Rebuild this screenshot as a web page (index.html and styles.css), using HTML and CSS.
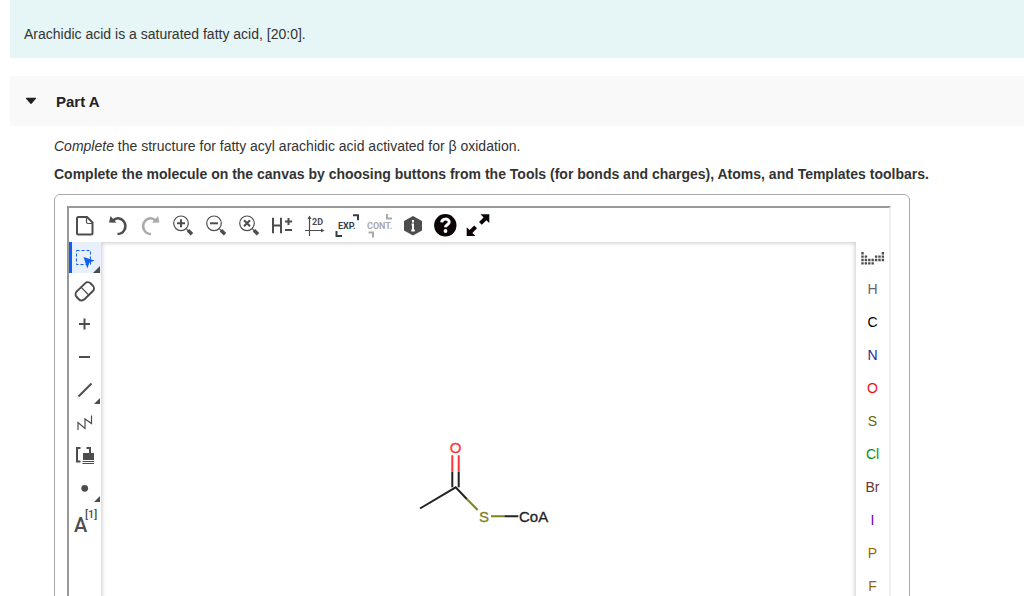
FILE: index.html
```
<!DOCTYPE html>
<html lang="en">
<head>
  <meta charset="UTF-8">
  <meta name="viewport" content="width=device-width, initial-scale=1.0">
  <title>Part A</title>
  <link rel="stylesheet" href="styles.css">
</head>
<body>
  <div class="intro">
    <p>Arachidic acid is a saturated fatty acid, [20:0].</p>
  </div>

  <button class="part-header" aria-expanded="true">
    <svg width="12" height="8" viewBox="0 0 12 8"><path d="M1.500 .8h9q1 0 .4.9L6.800 6.500q-.8.8-1.600 0L1.100 1.700Q.5.8 1.500.8z" fill="#222"/></svg>
    <span>Part A</span>
  </button>

  <main class="part-body">
    <p class="question"><em>Complete</em> the structure for fatty acyl arachidic acid activated for β oxidation.</p>
    <p class="instructions">Complete the molecule on the canvas by choosing buttons from the Tools (for bonds and charges), Atoms, and Templates toolbars.</p>

    <div class="editor-frame">
      <div class="editor">
        <div class="top-toolbar">
          <button class="tool" aria-label="New document">
            <svg viewBox="0 0 33 33"><path d="M9.500 9h8.500l5.500 5.500V25q0 1.500-1.500 1.500H9.500Q8 26.500 8 25V10.500Q8 9 9.500 9z" class="line"/><path d="M17.500 9v5q0 1.500 1.500 1.500h5" class="thin"/></svg>
          </button>
          <button class="tool" aria-label="Undo">
            <svg viewBox="0 0 33 33"><path d="M11 12.500C14.500 9 20 9.800 22.500 14.500S22 26 15.500 26" class="heavy"/><path d="M7 14.500 8.500 8l6 6.800z" class="solid"/></svg>
          </button>
          <button class="tool disabled" aria-label="Redo">
            <svg viewBox="0 0 33 33"><path d="M20.500 12.500C17 9 11.500 9.800 9 14.500S9.500 26 16 26" class="heavy"/><path d="M24.500 14.500 23 8l-6 6.800z" class="solid"/></svg>
          </button>
          <button class="tool" aria-label="Zoom in">
            <svg viewBox="0 0 33 33"><circle cx="13" cy="15.300" r="7.300" class="thin"/><path d="M9 15.300h8M13 11.300v8" class="line"/><path d="m18.500 20.800 2 2" class="thin"/><path d="m20 22.300 4 4" class="handle"/></svg>
          </button>
          <button class="tool" aria-label="Zoom out">
            <svg viewBox="0 0 33 33"><circle cx="13" cy="15.300" r="7.300" class="thin"/><path d="M9 15.300h8" class="line"/><path d="m18.500 20.800 2 2" class="thin"/><path d="m20 22.300 4 4" class="handle"/></svg>
          </button>
          <button class="tool" aria-label="Zoom reset">
            <svg viewBox="0 0 33 33"><circle cx="13" cy="15.300" r="7.300" class="thin"/><path d="m10 12.300 6 6m0-6-6 6" class="line"/><path d="m18.500 20.800 2 2" class="thin"/><path d="m20 22.300 4 4" class="handle"/></svg>
          </button>
          <button class="tool" aria-label="Toggle hydrogens">
            <svg viewBox="0 0 33 33"><path d="M6 9.700v15.600M14 9.700v15.600M6 17.500h8M18 13.500h7M21.500 10v7M18 22h7" class="line"/></svg>
          </button>
          <button class="tool" aria-label="Clean in 2D">
            <svg viewBox="0 0 33 33"><path d="M9.500 9v19M5 22.500h18" class="thin"/><path d="m7.500 11 2-3.500 2 3.500zM21 20.500l3.500 2-3.500 2z" class="solid"/><text x="12" y="16.500" font-size="9">2D</text></svg>
          </button>
          <button class="tool" aria-label="Expand groups">
            <svg viewBox="0 0 33 33" class="slate"><path d="M20 7.200h5v5M3.500 23v5h5.500" class="line"/><text x="5" y="21" font-size="9">EXP.</text></svg>
          </button>
          <button class="tool disabled" aria-label="Contract groups">
            <svg viewBox="0 0 33 33"><path d="M21 6v4.500h5M2.500 24.500h4.500v5" class="line"/><text x="1" y="21" font-size="9">CONT.</text></svg>
          </button>
          <button class="tool" aria-label="Information">
            <svg viewBox="0 0 33 33"><path d="m14 8 9 5v9.500L14 27.500l-9-5V13z" class="solid"/><path d="M14 12v2.600M12.600 16.500H14v6M12.300 22.500h3.500" stroke="#fff" stroke-width="2" fill="none"/></svg>
          </button>
          <button class="tool" aria-label="Help">
            <svg viewBox="0 0 33 33"><circle cx="13.300" cy="17.300" r="11.200" fill="#0b0304"/><path d="M9.700 14.300c.3-4.200 7.500-4.200 7.500-.2 0 2.700-3.700 2.600-3.700 5.100" stroke="#fff" stroke-width="3" fill="none"/><circle cx="13.500" cy="23" r="1.900" fill="#fff"/></svg>
          </button>
          <button class="tool" aria-label="Full screen">
            <svg viewBox="0 0 33 33"><path d="M15.500 6.300h8.800v8.800l-2.900-2.900-4.600 4.600-2.800-2.800 4.600-4.600zM10.500 28H1.700v-8.800l2.900 2.900 4.600-4.600 2.800 2.800-4.600 4.600z" fill="#0b0304"/></svg>
          </button>
        </div>

        <div class="workspace">
          <div class="side-toolbar">
            <button class="tool selected" aria-label="Rectangle selection">
              <svg viewBox="0 0 32 31"><path d="M7.500 8.500h14v14h-14z" fill="none" stroke="#1060f0" stroke-dasharray="3 2"/><path d="m14.500 15 11 3.500-5.200 2.200-2 5.800z" fill="#1060f0"/><path d="M31 24v7h-7z" class="solid"/></svg>
            </button>
            <button class="tool" aria-label="Erase">
              <svg viewBox="0 0 32 31"><g transform="rotate(-44 15.800 16.300)"><rect x="6" y="10.800" width="19.500" height="11" rx="4" class="line"/><path d="M16 11v11" class="thin"/></g></svg>
            </button>
            <button class="tool" aria-label="Increase charge">
              <svg viewBox="0 0 32 31"><path d="M10 16h11M15.500 10.500v11" class="line"/></svg>
            </button>
            <button class="tool" aria-label="Decrease charge">
              <svg viewBox="0 0 32 31"><path d="M10 16h11" class="line"/></svg>
            </button>
            <button class="tool" aria-label="Single bond">
              <svg viewBox="0 0 32 31"><path d="M9.500 22.500 22.500 9.500" class="line"/><path d="M31 24v6h-6z" class="solid"/></svg>
            </button>
            <button class="tool" aria-label="Chain">
              <svg viewBox="0 0 32 31"><path d="M9 23v-7.500l7 6V12l6.500 4.500v-8" class="thin"/></svg>
            </button>
            <button class="tool" aria-label="Position variation bond">
              <svg viewBox="0 0 32 31"><path d="M11.500 8H8v13.500h3.500M17.500 8h3.500v5" class="line"/><path d="M14 13h11v7H14z" class="solid"/><path d="M13.500 21.500H25M13.500 23.500H25" class="thin"/></svg>
            </button>
            <button class="tool" aria-label="Radical">
              <svg viewBox="0 0 32 31"><circle cx="15.700" cy="15.300" r="3.400" class="solid"/><path d="M31 23v6h-6z" class="solid"/></svg>
            </button>
            <button class="tool" aria-label="Atom map">
              <svg viewBox="0 0 32 31"><text x="5" y="26" font-size="20" font-weight="500">A<tspan x="16" y="12" font-size="11">[1]</tspan></text></svg>
            </button>
          </div>

          <div class="canvas">
            <svg class="molecule" width="150" height="100" viewBox="0 0 150 100">
              <path d="M42.300 36.700v15.500M48.700 36.700v15.500M10 73.500 45.700 52.300 57 64.300M94.300 81.300h14" stroke="#222"/>
              <path d="M42.300 20.300v16.400M48.700 20.300v16.400" stroke="#f33"/>
              <path d="m57 64.300 10.700 10.700M81 81.300h13.300" stroke="#808020"/>
              <text x="45.500" y="18" text-anchor="middle" fill="#f33" stroke="#f33">O</text>
              <text x="74" y="87" text-anchor="middle" fill="#808020" stroke="#808020">S</text>
              <text x="109" y="87" fill="#222" stroke="#222">CoA</text>
            </svg>
          </div>

          <div class="atom-toolbar">
            <button class="atom periodic" aria-label="Periodic table">
              <svg width="24" height="13" viewBox="0 0 24 13"><path d="M1.500 0v13M4.900 3.400v9.600M8.300 6.800v6.200M11.700 6.800v6.200M15.100 3.400v6.600M18.500 3.400v6.600M21.900 0v10" class="dots"/></svg>
            </button>
            <button class="atom hydrogen">H</button>
            <button class="atom carbon">C</button>
            <button class="atom nitrogen">N</button>
            <button class="atom oxygen">O</button>
            <button class="atom sulfur">S</button>
            <button class="atom chlorine">Cl</button>
            <button class="atom bromine">Br</button>
            <button class="atom iodine">I</button>
            <button class="atom phosphorus">P</button>
            <button class="atom fluorine">F</button>
          </div>
        </div>
      </div>
    </div>
  </main>
</body>
</html>
```
FILE: styles.css
```
* {
  box-sizing: border-box;
}

body {
  margin: 0;
  padding-left: 10px;
  height: 100vh;
  overflow: hidden;
  font-family: "Liberation Sans", Arial, sans-serif;
  font-size: 14px;
  line-height: 20px;
  color: #333;
  background: #fff;
}

p {
  margin: 0;
}

button {
  margin: 0;
  padding: 0;
  border: 0;
  background: none;
  font-family: inherit;
  cursor: pointer;
}

.intro {
  padding: 24px 14px 14px;
  background: #e6f6f6;
}

.part-header {
  display: flex;
  align-items: center;
  gap: 19px;
  width: 100%;
  height: 50px;
  margin-top: 18px;
  padding: 0 15px;
  background: #f9f9f9;
  color: #222;
  font-size: 15px;
  font-weight: bold;
}

.part-body {
  padding: 10px 0 0 44px;
}

.instructions {
  margin-top: 8px;
  font-weight: bold;
}

/* Molecule editor */
.editor-frame {
  margin: 10px 114px 0 0;
  padding: 11px 18px 12px 12px;
  border: 1px solid #aaa;
  border-radius: 6px;
}

.editor {
  border: 2px solid #eee;
  border-top-color: #999;
  border-left-color: #999;
}

.top-toolbar {
  display: flex;
  height: 34px;
}

.workspace {
  display: flex;
}

.side-toolbar {
  display: flex;
  flex-direction: column;
  gap: 2px;
  width: 32px;
}

.canvas {
  position: relative;
  flex: 1;
  box-shadow: inset 0 0 4px 1px #ccc;
}

.molecule {
  position: absolute;
  left: 309px;
  top: 193px;
  fill: none;
  stroke-width: 2;
  font-size: 15px;
}

.molecule text {
  stroke-width: .3;
}

.tool {
  flex: none;
  width: 33px;
  height: 33px;
  color: #4d4d4d;
}

.side-toolbar .tool {
  width: 32px;
  height: 31px;
}

.tool svg {
  display: block;
  width: 100%;
  height: 100%;
  font-family: Roboto, sans-serif;
  font-weight: bold;
  fill: currentColor;
}

.disabled {
  color: #aaa;
}

.slate {
  color: #333f48;
}

.selected {
  background: #e8f0fd;
  box-shadow: inset 3px 0 #1060f0;
}

.line,
.thin,
.heavy,
.handle {
  fill: none;
  stroke: currentColor;
  stroke-width: 2;
}

.thin {
  stroke-width: 1.2;
}

.heavy {
  stroke-width: 2.5;
}

.handle {
  stroke-width: 3.5;
}

.solid {
  fill: currentColor;
}

/* Atoms */
.atom-toolbar {
  width: 33px;
}

.atom {
  display: flex;
  align-items: center;
  justify-content: center;
  width: 33px;
  height: 33px;
  font-size: 14px;
}

.periodic {
  height: 30px;
  padding-top: 2px;
}

.dots {
  fill: none;
  stroke: #4d4d4d;
  stroke-width: 2.4;
  stroke-dasharray: 2.4 1;
}

.hydrogen { color: #666; }
.carbon { color: #000; }
.nitrogen { color: #2b2b99; }
.oxygen { color: #e11; }
.sulfur { color: #660; }
.chlorine { color: #0a8a1e; }
.bromine { color: #633; }
.iodine { color: #60a; }
.phosphorus,
.fluorine { color: #960; }
```
